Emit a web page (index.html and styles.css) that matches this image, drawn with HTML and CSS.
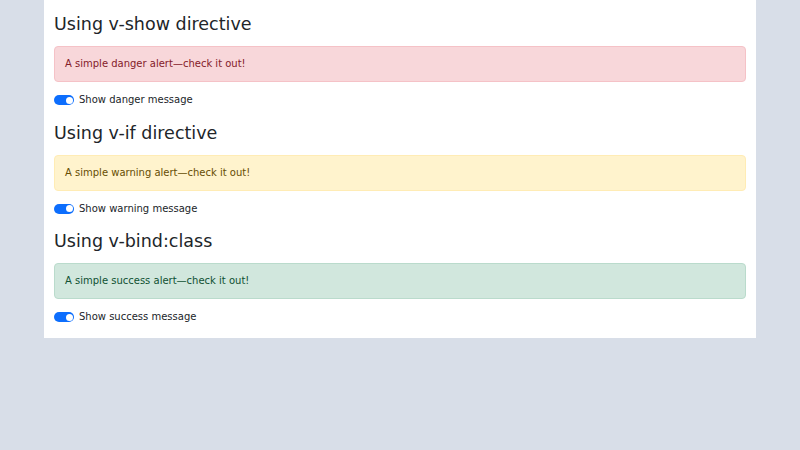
FILE: index.html
```html
<!DOCTYPE html>
<html>
<head>
<meta charset="utf-8">
<link rel="stylesheet" href="styles.css">
</head>
<body>
<div class="page">
  <section class="demo">
    <h2 class="title">Using v-show directive</h2>
    <div class="alert alert-danger">A simple danger alert—check it out!</div>
    <label class="switch"><span class="toggle"></span>Show danger message</label>
  </section>
  <section class="demo">
    <h2 class="title">Using v-if directive</h2>
    <div class="alert alert-warning">A simple warning alert—check it out!</div>
    <label class="switch"><span class="toggle"></span>Show warning message</label>
  </section>
  <section class="demo">
    <h2 class="title">Using v-bind:class</h2>
    <div class="alert alert-success">A simple success alert—check it out!</div>
    <label class="switch"><span class="toggle"></span>Show success message</label>
  </section>
</div>
</body>
</html>
```
FILE: styles.css
```css
html, body {
  margin: 0;
  padding: 0;
  background: #d8dee8;
  font-family: "DejaVu Sans", sans-serif;
  color: #212529;
}
.page {
  width: 692px;
  margin: 0 auto;
  background: #fff;
  padding: 0 10px 13px;
  display: flex;
  flex-direction: column;
}
.demo {
  display: flex;
  flex-direction: column;
  padding-top: 12px;
}
.demo + .demo {
  padding-top: 12.5px;
}
.title {
  margin: 0 0 10px;
  font-size: 17.5px;
  font-weight: 400;
  line-height: 24px;
}
.alert {
  border: 1px solid transparent;
  border-radius: 4px;
  padding: 9px 10px;
  font-size: 10px;
  line-height: 16px;
  margin-bottom: 10px;
}
.alert-danger { background: #f8d7da; border-color: #f5c2c7; color: #842029; }
.alert-warning { background: #fff3cd; border-color: #ffecb5; color: #664d03; }
.alert-success { background: #d1e7dd; border-color: #badbcc; color: #0f5132; }
.switch {
  display: flex;
  align-items: center;
  gap: 5px;
  font-size: 10px;
  line-height: 16px;
}
.toggle {
  width: 20px;
  height: 10px;
  border-radius: 5px;
  background: #0d6efd;
  position: relative;
}
.toggle::after {
  content: "";
  position: absolute;
  right: 1.5px;
  top: 1.5px;
  width: 7px;
  height: 7px;
  border-radius: 50%;
  background: #fff;
}
```
